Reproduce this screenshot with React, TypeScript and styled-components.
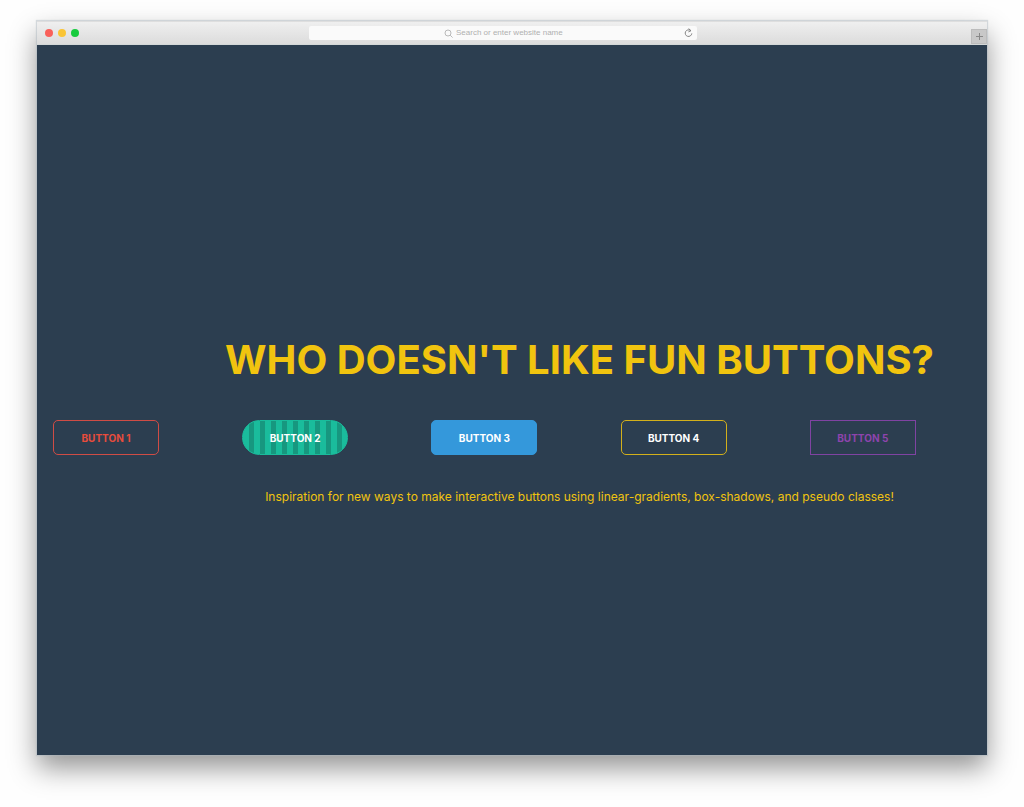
import React from "react";
import styled, { createGlobalStyle, css } from "styled-components";

const GlobalStyle = createGlobalStyle`
  * { box-sizing: border-box; }
  body { margin: 0; background: #fefefe; font-family: Inter, "Liberation Sans", sans-serif; }
`;

const Page = styled.div`
  min-height: 100vh;
  padding: 21px 37px 52px;
  display: flex;
`;

const Window = styled.div`
  flex: 1;
  min-width: 0;
  display: flex;
  flex-direction: column;
  box-shadow: 0 0 1px 1px rgba(170, 182, 190, 0.45), 0 13px 26px rgba(0, 0, 0, 0.42);
`;

const TitleBar = styled.header`
  height: 24px;
  display: grid;
  grid-template-columns: 272fr 388px 290fr;
  align-items: center;
  background: linear-gradient(#efefef, #dcdcdc);
  border-top: 1px solid #dedede;
  border-bottom: 1px solid #d4d8d8;
`;

const Lights = styled.div`
  display: flex;
  gap: 5px;
  padding-left: 8px;
`;

const Light = styled.span<{ $color: string }>`
  width: 8px;
  height: 8px;
  border-radius: 50%;
  background: ${(p) => p.$color};
`;

const AddressBar = styled.form`
  height: 14px;
  margin: 0;
  padding: 0 4px 0 135px;
  display: flex;
  align-items: center;
  gap: 3px;
  background: #fafafa;
  border-radius: 2px;
`;

const AddressInput = styled.input`
  flex: 1;
  min-width: 0;
  height: 14px;
  padding: 0;
  border: 0;
  outline: 0;
  background: transparent;
  font: 8px/14px "Liberation Sans", sans-serif;
  &::placeholder { color: #b0b0b0; opacity: 1; }
`;

const IconButton = styled.button`
  display: flex;
  padding: 0;
  border: 0;
  background: transparent;
`;

const NewTab = styled(IconButton)`
  width: 16px;
  height: 15px;
  align-self: end;
  justify-self: end;
  align-items: center;
  justify-content: center;
  background: #c8c8c8;
  border: 1px solid #bcbcbc;
`;

const Content = styled.main`
  flex: 1;
  padding-top: 289px;
  background: #2c3e50;
  color: #f1c40f;
`;

const Title = styled.h1`
  margin: 0;
  padding-left: 135px;
  font-size: 40px;
  line-height: 52px;
  font-weight: 700;
  text-align: center;
`;

const ButtonRow = styled.div`
  display: grid;
  grid-template-columns: repeat(5, 1fr);
  padding: 34px 4px 34px 16px;
  margin-right: -16px;
  justify-items: start;
`;

const variants = {
  red: css`
    color: #e74c3c;
    border: 1px solid #d04c45;
    border-radius: 5px;
  `,
  green: css`
    color: #fff;
    border: 1px solid #1abc9c;
    border-radius: 18px;
    background: repeating-linear-gradient(90deg, #1abc9c 0 6px, #17977f 6px 11px);
  `,
  blue: css`
    color: #fff;
    border: 1px solid #3498db;
    border-radius: 5px;
    background: #3498db;
  `,
  yellow: css`
    color: #fff;
    border: 1px solid #d3b01b;
    border-radius: 5px;
  `,
  purple: css`
    color: #8e44ad;
    border: 1px solid #8043a2;
  `,
};

const FunButton = styled.button<{ $variant: keyof typeof variants }>`
  width: 106px;
  height: 35px;
  padding: 0;
  background: transparent;
  font: 700 10px/16px Inter, "Liberation Sans", sans-serif;
  text-transform: uppercase;
  cursor: pointer;
  ${(p) => variants[p.$variant]}
`;

const Tagline = styled.p`
  margin: 0;
  padding-left: 135px;
  font-size: 12px;
  line-height: 16px;
  text-align: center;
`;

const buttons: (keyof typeof variants)[] = ["red", "green", "blue", "yellow", "purple"];

export default function App() {
  return (
    <>
      <GlobalStyle />
      <Page>
        <Window>
          <TitleBar>
            <Lights>
              <Light $color="#f9605a" />
              <Light $color="#fac536" />
              <Light $color="#17cb3e" />
            </Lights>
            <AddressBar onSubmit={(e) => e.preventDefault()}>
              <svg width="9" height="9" viewBox="0 0 9 9" fill="none" stroke="#aaa" strokeWidth="0.8" aria-hidden="true">
                <circle cx="4" cy="4" r="3" />
                <path d="M6.2 6.2 8.6 8.6" />
              </svg>
              <AddressInput aria-label="Address" placeholder="Search or enter website name" />
              <IconButton type="submit" aria-label="Reload">
                <svg width="9" height="10" viewBox="0 0 9 10" fill="none" stroke="#777" strokeWidth="0.9">
                  <path d="M6.6 2.6A3.3 3.3 0 1 0 7.8 5.4" />
                  <path d="M4.6 0.6 7 2.7 4.4 3.9" />
                </svg>
              </IconButton>
            </AddressBar>
            <NewTab type="button" aria-label="New tab">
              <svg width="9" height="9" viewBox="0 0 9 9" stroke="#888" strokeWidth="1">
                <path d="M4.5 1v7M1 4.5h7" />
              </svg>
            </NewTab>
          </TitleBar>
          <Content>
            <Title>WHO DOESN'T LIKE FUN BUTTONS?</Title>
            <ButtonRow>
              {buttons.map((variant, i) => (
                <FunButton key={variant} type="button" $variant={variant}>
                  Button {i + 1}
                </FunButton>
              ))}
            </ButtonRow>
            <Tagline>
              Inspiration for new ways to make interactive buttons using linear-gradients, box-shadows, and pseudo classes!
            </Tagline>
          </Content>
        </Window>
      </Page>
    </>
  );
}
